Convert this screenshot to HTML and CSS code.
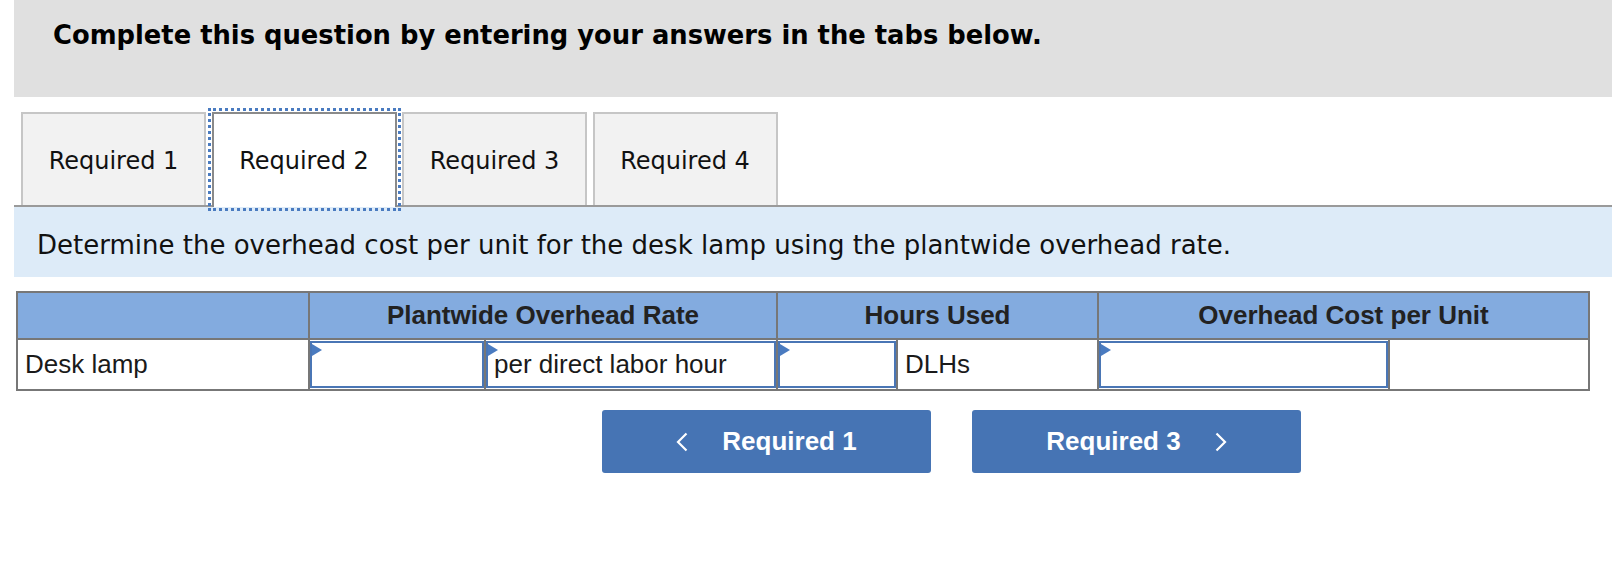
FILE: index.html
```html
<!DOCTYPE html>
<html>
<head>
<meta charset="utf-8">
<link rel="stylesheet" href="styles.css">
</head>
<body>
<div class="header">
  <h1 class="title">Complete this question by entering your answers in the tabs below.</h1>
</div>
<div class="tabs">
  <div class="tab">Required 1</div>
  <div class="tab active">Required 2</div>
  <div class="tab">Required 3</div>
  <div class="tab">Required 4</div>
</div>
<div class="band">Determine the overhead cost per unit for the desk lamp using the plantwide overhead rate.</div>
<table class="grid">
  <colgroup>
    <col class="c1"><col class="c2a"><col class="c2b"><col class="c3a"><col class="c3b"><col class="c4a"><col class="c4b">
  </colgroup>
  <thead>
    <tr>
      <th></th>
      <th colspan="2">Plantwide Overhead Rate</th>
      <th colspan="2">Hours Used</th>
      <th colspan="2">Overhead Cost per Unit</th>
    </tr>
  </thead>
  <tbody>
    <tr>
      <td class="label">Desk lamp</td>
      <td class="fcell"><div class="field"></div></td>
      <td class="fcell"><div class="field">per direct labor hour</div></td>
      <td class="fcell"><div class="field"></div></td>
      <td class="label">DLHs</td>
      <td class="fcell"><div class="field"></div></td>
      <td></td>
    </tr>
  </tbody>
</table>
<div class="nav">
  <button class="btn"><svg class="chev" width="12" height="20" viewBox="0 0 12 20"><polyline points="10.5,1.5 2,10 10.5,18.5" fill="none" stroke="#fff" stroke-width="2.2"/></svg><span>Required 1</span></button>
  <button class="btn"><span>Required 3</span><svg class="chev" width="12" height="20" viewBox="0 0 12 20"><polyline points="1.5,1.5 10,10 1.5,18.5" fill="none" stroke="#fff" stroke-width="2.2"/></svg></button>
</div>
</body>
</html>
```
FILE: styles.css
```css
html, body { margin: 0; padding: 0; background: #fff; }
body { font-family: "DejaVu Sans", Verdana, sans-serif; color: #111; }

.header {
  margin-left: 14px;
  height: 97px;
  box-sizing: border-box;
  background: #e0e0e0;
  padding: 20px 0 0 39px;
}
.title {
  margin: 0;
  font: bold 25.8px/30px "DejaVu Sans", Verdana, sans-serif;
  color: #000;
}

.tabs {
  display: flex;
  gap: 5.5px;
  margin: 15px 0 0 14px;
  padding-left: 7px;
  height: 93px;
  border-bottom: 2px solid #9a9a9a;
}
.tab {
  width: 185px;
  height: 93px;
  box-sizing: border-box;
  background: #f2f2f2;
  border: 2px solid #c6c6c6;
  border-bottom: none;
  display: flex;
  align-items: center;
  justify-content: center;
  font-size: 24px;
  color: #111;
  padding-top: 2px;
}
.tab.active {
  background: #fff;
  border-color: #8a8a8a;
  height: 95px;
  position: relative;
  z-index: 1;
  outline: 3px dotted #4a7bc0;
  outline-offset: 1px;
  padding-bottom: 2px;
}

.band {
  margin-left: 14px;
  height: 70px;
  box-sizing: border-box;
  background: #ddebf8;
  display: flex;
  align-items: center;
  padding: 5px 0 0 23px;
  font-size: 26px;
  color: #111;
  margin-bottom: 14px;
}

.grid {
  margin-left: 16px;
  border-collapse: collapse;
  table-layout: fixed;
  width: 1572px;
  font-family: "Liberation Sans", Arial, sans-serif;
  font-size: 26px;
  color: #1a1a1a;
}
.c1 { width: 292px; }
.c2a { width: 176px; }
.c2b { width: 292px; }
.c3a { width: 120px; }
.c3b { width: 201px; }
.c4a { width: 291px; }
.c4b { width: 200px; }
.grid th, .grid td {
  border: 2px solid #777;
  padding: 0;
}
.grid th {
  background: #83abdf;
  height: 45px;
  font-weight: bold;
  text-align: center;
  color: #222;
}
.grid td { height: 48px; }
.grid td.label { padding-left: 7px; }
.grid td.fcell { padding: 1px 0 0 0; vertical-align: top; }
.field {
  position: relative;
  box-sizing: border-box;
  height: 47px;
  border: 2px solid #4a76b5;
  padding-left: 6px;
  display: flex;
  align-items: center;
  white-space: nowrap;
}
.field::before {
  content: "";
  position: absolute;
  left: 0;
  top: 1px;
  border-left: 10px solid #4a7bc0;
  border-top: 6px solid transparent;
  border-bottom: 6px solid transparent;
}

.nav {
  display: flex;
  gap: 41px;
  margin: 19px 0 0 602px;
}
.btn {
  width: 329px;
  height: 63px;
  border: none;
  border-radius: 3px;
  background: #4674b4;
  color: #fff;
  font: bold 26px "Liberation Sans", Arial, sans-serif;
  display: flex;
  align-items: center;
  justify-content: center;
  gap: 34px;
  padding: 0;
}
.chev { display: block; }
```
